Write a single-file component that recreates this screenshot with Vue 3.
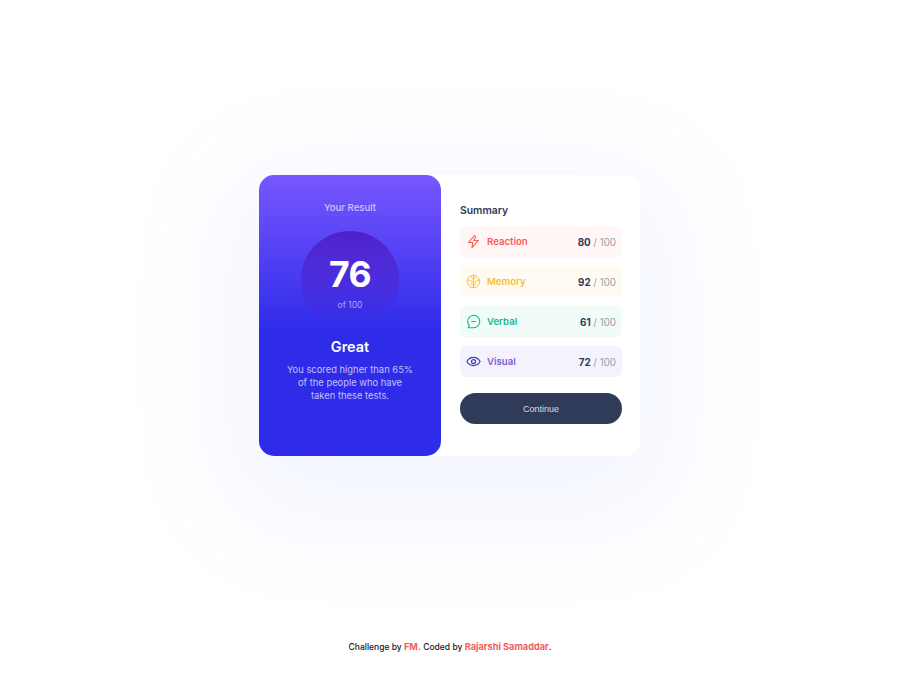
<script setup>
const rows = [
  { key: 'reaction', label: 'Reaction', score: 80 },
  { key: 'memory', label: 'Memory', score: 92 },
  { key: 'verbal', label: 'Verbal', score: 61 },
  { key: 'visual', label: 'Visual', score: 72 },
]
</script>

<template>
  <div class="page">
    <main class="stage">
      <section class="card">
        <div class="result">
          <h2 class="result-title">Your Result</h2>
          <div class="circle">
            <span class="num">76</span>
            <span class="of">of 100</span>
          </div>
          <h3 class="great">Great</h3>
          <p class="desc">You scored higher than 65% of the people who have taken these tests.</p>
        </div>
        <div class="summary">
          <h2 class="summary-title">Summary</h2>
          <ul class="rows">
            <li v-for="r in rows" :key="r.key" class="row" :class="r.key">
              <span class="ico">
                <svg v-if="r.key === 'reaction'" viewBox="0 0 24 24" fill="none" stroke="currentColor" stroke-width="1.7" stroke-linejoin="round" stroke-linecap="round"><path d="M14 2 4 13.500h7L9.500 22l10-11.500h-7L15.500 4"/></svg>
                <svg v-else-if="r.key === 'memory'" viewBox="0 0 24 24" fill="none" stroke="currentColor" stroke-width="1.5" stroke-linecap="round"><circle cx="12" cy="12" r="10"/><path d="M12 2v20M12 7.500c-2 0-3.500-1-3.500-3M12 7.500c2 0 3.500-1 3.500-3M12 13.500c-2.500 0-4.500-1-4.500-3.500-2 0-3.500-.5-5.500 0M12 13.500c2.500 0 4.500-1 4.500-3.500 2 0 3.500-.5 5.500 0M12 18c-2 0-3.500-.5-4-2.500M12 18c2 0 3.500-.5 4-2.500"/></svg>
                <svg v-else-if="r.key === 'verbal'" viewBox="0 0 24 24" fill="none" stroke="currentColor" stroke-width="1.7" stroke-linecap="round" stroke-linejoin="round"><path d="M12 2a10 10 0 0 1 0 20H3.500l1.900-3.400A10 10 0 0 1 12 2Z"/><path d="M9 12h6"/></svg>
                <svg v-else viewBox="0 0 24 24" fill="none" stroke="currentColor" stroke-width="2"><path d="M1.500 12C4 7.500 7.500 5.500 12 5.500s8 2 10.500 6.500c-2.500 4.500-6 6.500-10.500 6.500S4 16.500 1.500 12Z"/><circle cx="12" cy="12" r="3.200"/></svg>
              </span>
              <span class="label">{{ r.label }}</span>
              <span class="score"><b>{{ r.score }}</b><i> / 100</i></span>
            </li>
          </ul>
          <button class="continue" type="button">Continue</button>
        </div>
      </section>
    </main>
    <footer class="foot">Challenge by <a>FM.</a> Coded by <a>Rajarshi Samaddar</a>.</footer>
  </div>
</template>

<style>
html, body { margin: 0; background: #fff; }
</style>

<style scoped>
.page {
  width: 900px;
  height: 675px;
  overflow: hidden;
  display: flex;
  flex-direction: column;
  align-items: flex-start;
  padding: 175px 0 0 259px;
  box-sizing: border-box;
  font-family: Inter, "Noto Sans", sans-serif;
}
.stage { height: 281px; }
.card {
  width: 381px;
  height: 281px;
  display: flex;
  background: #fff;
  border-radius: 15px;
  box-shadow: 0 30px 110px 30px rgba(120, 135, 255, 0.085);
}
.result {
  width: 182px;
  height: 281px;
  box-sizing: border-box;
  padding-top: 26px;
  border-radius: 15px;
  background: linear-gradient(180deg, #7857ff 0%, #2e2be9 56%, #2e2be9 100%);
  display: flex;
  flex-direction: column;
  align-items: center;
  color: #fff;
}
.result-title {
  margin: 0;
  font-size: 9.600px;
  line-height: 14px;
  font-weight: 500;
  color: #c8c7ff;
}
.circle {
  width: 98px;
  height: 98px;
  margin-top: 16px;
  border-radius: 50%;
  background: linear-gradient(180deg, rgba(77, 33, 201, 1) 0%, rgba(37, 33, 201, 0) 100%);
  display: flex;
  flex-direction: column;
  align-items: center;
}
.num {
  margin-top: 22px;
  font-size: 35.500px;
  line-height: 44px;
  font-weight: 700;
  letter-spacing: -0.5px;
}
.of {
  margin-top: 2px;
  font-size: 8.500px;
  line-height: 12px;
  color: #a8a6f5;
}
.great {
  margin: 8px 0 0;
  font-size: 14.500px;
  line-height: 20px;
  font-weight: 600;
}
.desc {
  margin: 6px 0 0;
  width: 128px;
  text-align: center;
  font-size: 9.400px;
  line-height: 13px;
  color: #c3c1ff;
}
.summary {
  flex: 1;
  box-sizing: border-box;
  padding: 29px 18px 0 19px;
}
.summary-title {
  margin: 0;
  font-size: 10.400px;
  line-height: 14px;
  font-weight: 600;
  color: #303b5a;
}
.rows {
  list-style: none;
  margin: 8px 0 0;
  padding: 0;
  display: flex;
  flex-direction: column;
  gap: 9px;
}
.row {
  height: 31px;
  border-radius: 6px;
  display: flex;
  align-items: center;
  padding: 0 6px;
  font-size: 9.600px;
}
.ico {
  width: 15px;
  height: 15px;
  display: block;
}
.ico svg { display: block; width: 15px; height: 15px; }
.label {
  margin-left: 6px;
  font-weight: 600;
  position: relative;
  top: -0.5px;
}
.score {
  margin-left: auto;
  padding-top: 2px;
  color: #303b5a;
  font-size: 9.800px;
}
.score b { font-weight: 700; }
.score i { font-style: normal; color: #9b9ea8; }
.reaction { background: #fff6f5; color: #f25c5c; }
.memory { background: #fffbf2; color: #f5bd3c; }
.verbal { background: #f1fbf8; color: #14b892; }
.visual { background: #f4f2fd; color: #3d3fbf; }
.visual .label { color: #7a5fd6; }
.continue {
  display: block;
  width: 100%;
  height: 31px;
  margin-top: 16px;
  border: 0;
  border-radius: 16px;
  background: #303b5a;
  color: #d9dce6;
  font-family: "Liberation Sans", Arial, sans-serif;
  font-size: 9px;
}
.foot {
  position: absolute;
  top: 641px;
  left: 0;
  width: 900px;
  text-align: center;
  font-size: 8.500px;
  line-height: 12px;
  color: #1a1a1a;
  font-weight: 500;
}
.foot a { color: #f25c5c; font-weight: 700; font-size: 9.200px; }
</style>
